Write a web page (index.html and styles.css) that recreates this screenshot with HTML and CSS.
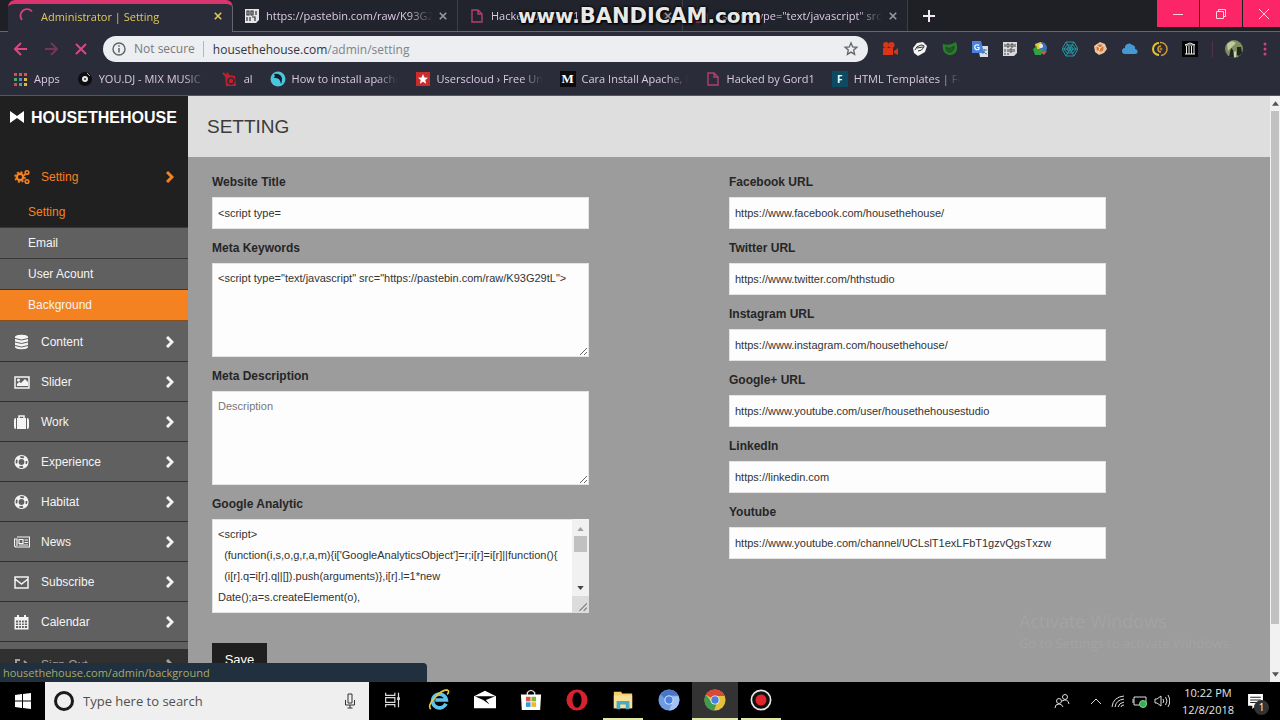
FILE: index.html
```html
<!DOCTYPE html>
<html lang="en">
<head>
    <meta charset="UTF-8">
    <meta name="viewport" content="width=device-width, initial-scale=1.0">
    <title>Administrator | Setting</title>
    <link rel="stylesheet" href="styles.css">
</head>
<body>

    <!-- Browser window -->
    <header class="browser">
        <div class="tabs">
            <div class="tab active">
                <svg class="icon" viewBox="0 0 16 16"><path d="M3 12A6 6 0 0 1 13 3.500" fill="none" stroke="#d8417a" stroke-width="1.800"/></svg>
                <span class="tab-title">Administrator | Setting</span>
                <button class="tab-close" aria-label="Close tab"><svg viewBox="0 0 10 10"><path d="M1 1l8 8M9 1l-8 8"/></svg></button>
            </div>
            <div class="tab">
                <svg class="icon" viewBox="0 0 16 16"><path d="M1 1h14v11l-3 3H1z" fill="#e4e4ea"/><path d="M3 3v4h2V3zM7 3v4h2V3zM12 3v4M3 9v4M6 9v4M8 9h3v4" fill="none" stroke="#333" stroke-width="1.200"/></svg>
                <span class="tab-title">https://pastebin.com/raw/K93G29tL</span>
                <button class="tab-close" aria-label="Close tab"><svg viewBox="0 0 10 10"><path d="M1 1l8 8M9 1l-8 8"/></svg></button>
            </div>
            <div class="tab">
                <svg class="icon" viewBox="0 0 16 16"><path d="M3 2h6l4 4v8H3zM9 2v4h4" fill="none" stroke="#b0406e" stroke-width="1.400"/></svg>
                <span class="tab-title">Hacked by Gord1</span>
                <button class="tab-close" aria-label="Close tab"><svg viewBox="0 0 10 10"><path d="M1 1l8 8M9 1l-8 8"/></svg></button>
            </div>
            <div class="tab">
                <svg class="icon" viewBox="0 0 16 16"><path d="M3 2h6l4 4v8H3zM9 2v4h4" fill="none" stroke="#b0406e" stroke-width="1.400"/></svg>
                <span class="tab-title">&lt;script type="text/javascript" src="https://pastebin.com"&gt;</span>
                <button class="tab-close" aria-label="Close tab"><svg viewBox="0 0 10 10"><path d="M1 1l8 8M9 1l-8 8"/></svg></button>
            </div>
            <button class="new-tab" aria-label="New tab"><svg viewBox="0 0 12 12"><path d="M6 0v12M0 6h12"/></svg></button>
            <div class="window-buttons">
                <button aria-label="Minimize"><svg viewBox="0 0 10 10"><path d="M0 5.500h10"/></svg></button>
                <button aria-label="Restore"><svg viewBox="0 0 10 10"><path d="M.5 2.500h7v7h-7zM2.500 2.500v-2h7v7h-2"/></svg></button>
                <button aria-label="Close"><svg viewBox="0 0 10 10"><path d="M0 0l10 10M10 0L0 10"/></svg></button>
            </div>
        </div>

        <div class="toolbar">
            <button class="nav-btn" aria-label="Back"><svg viewBox="0 0 14 14"><path d="M13 7H1M7 1L1 7l6 6"/></svg></button>
            <button class="nav-btn dim" aria-label="Forward"><svg viewBox="0 0 14 14"><path d="M1 7h12M7 1l6 6-6 6"/></svg></button>
            <button class="nav-btn" aria-label="Stop"><svg viewBox="0 0 14 14"><path d="M2 2l10 10M12 2L2 12"/></svg></button>
            <div class="address">
                <svg class="icon" viewBox="0 0 16 16"><circle cx="8" cy="8" r="6" fill="none" stroke="#5f6368" stroke-width="1.400"/><path d="M8 7v4.500M8 4.300v1.500" stroke="#5f6368" stroke-width="1.500"/></svg>
                <span class="secure">Not secure</span>
                <span class="url">housethehouse.com<span>/admin/setting</span></span>
                <svg class="icon" viewBox="0 0 16 16"><path d="M8 2l1.700 3.900 4.200.4-3.200 2.800.9 4.200L8 11.100l-3.600 2.200.9-4.200L2.100 6.300l4.200-.4z" fill="none" stroke="#5f6368" stroke-width="1.300"/></svg>
            </div>
            <div class="extensions">
                <svg class="icon" viewBox="0 0 16 16"><g fill="#d93518"><circle cx="4" cy="4" r="3"/><circle cx="9.500" cy="4" r="3"/><path d="M1 7h10v7H1zM12 10l4-3v7l-4-2z"/></g></svg>
                <svg class="icon" viewBox="0 0 16 16"><path d="M5 2l6-1 4 4-2 6-7 4-4-3-1-5z" fill="#f4f4f4"/><path d="M3 9q1-4 6-5 4 0 3 2-2 4-6 4M5 7l6-1" fill="none" stroke="#333"/></svg>
                <svg class="icon" viewBox="0 0 16 16"><path d="M1 3q7 2 13-2 3 8-2 12-6 3-10-2-2-4-1-8z" fill="#2c7a2e"/><path d="M4 6q0 6 5 5 4-2 3-6-5 4-8 1" fill="#205e24" stroke="#144d18"/></svg>
                <svg class="icon" viewBox="0 0 16 16"><path d="M6 5h10v11H8z" fill="#dadfe6"/><path d="M0 0h9l3 12H0z" fill="#4a82e0"/><path d="M7 4.500a2.500 2.500 0 1 0 0 3.500V6.500H5" fill="none" stroke="#fff" stroke-width="1.200"/><path d="M10 9h5M12.500 8q0 4-2 5M11 10q2 3 4 3" fill="none" stroke="#58789a"/></svg>
                <svg class="icon" viewBox="0 0 16 16"><path d="M1 1h14v11l-3 3H1z" fill="#d9d9de"/><path d="M3 3v3M5 3h2v3H5zM9 3h2v3H9zM13 3v3M3 8v3M6 8v3M8 8h2v3H8zM12 8v3M3 12v2M6 12v2" fill="none" stroke="#444"/></svg>
                <svg class="icon" viewBox="0 0 16 16"><circle cx="9" cy="7" r="6" fill="#3d71b8"/><path d="M3 3l6-2 2 5-6 3z" fill="#e6c92f"/><path d="M1 8l4-3v3h6l-2 6H3z" fill="#31a243"/><path d="M9 11l6-1-3 4z" fill="#d65b37"/><circle cx="9" cy="5" r="2" fill="#dfe9ef"/></svg>
                <svg class="icon" viewBox="0 0 16 16"><path d="M4 1h8l4 7-4 7H4L0 8zM5 4h6l3 4-3 4H5L2 8zM4 1l8 14M12 1L4 15M0 8h16M6 6h4l1 2-1 2H6L5 8z" fill="none" stroke="#2597a3"/></svg>
                <svg class="icon" viewBox="0 0 16 16"><path d="M8 1l5 2 2 5-3 4-5 2-4-3-1-6z" fill="#e9c2a0"/><circle cx="8" cy="7" r="3.500" fill="#d87535"/><path d="M4 4l4 3 4-3M8 7l-2 5" stroke="#f9e4d0" fill="none"/></svg>
                <svg class="icon" viewBox="0 0 16 16"><path d="M3 13a3 3 0 0 1 0-6 4 4 0 0 1 7-3 3 3 0 0 1 3 4 2.500 2.500 0 0 1 0 5z" fill="#4599d2"/></svg>
                <svg class="icon" viewBox="0 0 16 16"><path d="M7 2a6 6 0 0 0 0 12" fill="none" stroke="#e3c52d" stroke-width="2"/><path d="M9 5a3 3 0 1 0 0 6M8 1.500a6.500 6.500 0 0 1 1 13" fill="none" stroke="#d49b33" stroke-width="1.500"/><circle cx="9" cy="8" r="1.500" fill="#a87a2c"/></svg>
                <svg class="icon" viewBox="0 0 16 16"><path d="M0 0h16v16H0z" fill="#050505"/><path d="M3 4l5-2 5 2zM3 13h10M4.500 5v8M7 5v8M9.500 5v8M12 5v8" fill="none" stroke="#eee"/></svg>
            </div>
            <span class="divider"></span>
            <svg class="avatar" viewBox="0 0 18 18"><circle cx="9" cy="9" r="9" fill="#7f8e60"/><path d="M2 4l5-3 4 2-4 4-4 4z" fill="#c2c99c"/><path d="M4 17l2-9 2 2 1 8zM12 15l0-8 4 0 1 6-3 3z" fill="#20251f"/><path d="M9 12l2-1v6H9z" fill="#cdd3c0"/></svg>
            <button class="menu-btn" aria-label="Menu"><svg viewBox="0 0 4 14"><circle cx="2" cy="2" r="1.500"/><circle cx="2" cy="7" r="1.500"/><circle cx="2" cy="12" r="1.500"/></svg></button>
        </div>

        <nav class="bookmarks">
            <a href="#"><svg class="icon" viewBox="0 0 16 16"><path d="M2 2h3v3H2zM2 12h3v3H2z" fill="#d64b4b"/><path d="M7 2h3v3H7zM12 2h3v3h-3z" fill="#d8574d"/><path d="M2 7h3v3H2zM7 12h3v3H7z" fill="#4bab62"/><path d="M7 7h3v3H7z" fill="#4d88df"/><path d="M12 7h3v3h-3zM12 12h3v3h-3z" fill="#e0b541"/></svg><span>Apps</span></a>
            <a href="#"><svg class="icon" viewBox="0 0 16 16"><circle cx="8" cy="8" r="7" fill="#0e0e12"/><circle cx="8" cy="8" r="3" fill="#e8e8e8"/><circle cx="8" cy="8" r="1" fill="#333"/><path d="M10 2l3 3" stroke="#aaa"/></svg><span>YOU.DJ - MIX MUSIC ONLINE</span></a>
            <a href="#"><svg class="icon" viewBox="0 0 16 16"><path d="M3 4l3-3 1 3 6 1 1 10H4z" fill="#c41e2b"/><circle cx="9" cy="10" r="3" fill="none" stroke="#2a2c38" stroke-width="1.500"/><path d="M1 2l3 3" stroke="#c41e2b" stroke-width="2"/></svg><span>al</span></a>
            <a href="#"><svg class="icon" viewBox="0 0 16 16"><circle cx="8" cy="8" r="7.500" fill="#4cc5df"/><path d="M4 3q6-1 8 4 0 4-1 6-1-6-5-6l-3 0q3-1 1-4z" fill="#10202d"/></svg><span>How to install apache tomcat</span></a>
            <a href="#"><svg class="icon" viewBox="0 0 16 16"><path d="M1 1h14v14H1z" fill="#cc2b2b"/><path d="M8 3l1.500 3.500 3.500.3-2.700 2.300.8 3.600L8 10.800l-3.100 1.900.8-3.600L3 6.800l3.500-.3z" fill="#fff"/></svg><span>Userscloud › Free Unlimited</span></a>
            <a href="#"><b class="icon badge-m">M</b><span>Cara Install Apache, MySQL</span></a>
            <a href="#"><svg class="icon" viewBox="0 0 16 16"><path d="M3 2h6l4 4v8H3zM9 2v4h4" fill="none" stroke="#b0406e" stroke-width="1.400"/></svg><span>Hacked by Gord1</span></a>
            <a href="#"><b class="icon badge-f">F</b><span>HTML Templates | Foundation</span></a>
        </nav>
        <div class="watermark">www.<b>BANDICAM</b>.com</div>
    </header>

    <!-- Admin page -->
    <main class="page">
        <aside class="sidebar">
            <a class="logo" href="#"><svg viewBox="0 0 14 12"><path d="M0 0l7 5 7-5v12L7 7l-7 5z"/></svg>HOUSETHEHOUSE</a>
            <ul class="menu">
                <li class="open">
                    <a href="#"><svg class="icon" viewBox="0 0 16 16"><g fill="none" stroke="currentColor"><circle cx="6" cy="8" r="3.200" stroke-width="2.400"/><circle cx="6" cy="8" r="5" stroke-width="1.500" stroke-dasharray="2 1.930"/><circle cx="13" cy="3.500" r="1.800" stroke-width="1.600"/><circle cx="13" cy="12.500" r="1.800" stroke-width="1.600"/></g></svg>Setting<svg class="arrow" viewBox="0 0 8 12"><path d="M1 1l5 5-5 5"/></svg></a>
                    <ul class="submenu">
                        <li class="current"><a href="#">Setting</a></li>
                        <li><a href="#">Email</a></li>
                        <li><a href="#">User Acount</a></li>
                        <li class="hovered"><a href="#">Background</a></li>
                    </ul>
                </li>
                <li><a href="#"><svg class="icon" viewBox="0 0 16 16"><path d="M1 3c0-3 13-3 13 0v10c0 3-13 3-13 0z" fill="currentColor"/><path d="M1 4.500q6.500 3 13 0M1 8q6.500 3 13 0M1 11.500q6.500 3 13 0" fill="none" stroke="#606060"/></svg>Content<svg class="arrow" viewBox="0 0 8 12"><path d="M1 1l5 5-5 5"/></svg></a></li>
                <li><a href="#"><svg class="icon" viewBox="0 0 16 16"><path d="M1 3h14v11H1z" fill="none" stroke="currentColor" stroke-width="1.500"/><circle cx="4.500" cy="6" r="1.500" fill="currentColor"/><path d="M3 12V10l2-2 2 1 4-4 3 3v4z" fill="currentColor"/></svg>Slider<svg class="arrow" viewBox="0 0 8 12"><path d="M1 1l5 5-5 5"/></svg></a></li>
                <li><a href="#"><svg class="icon" viewBox="0 0 16 16"><path d="M5 5V2h5v3" fill="none" stroke="currentColor" stroke-width="1.500"/><path d="M0 6q0-2 2-2v11q-2 0-2-2zM3 4h9v11H3zM13 4q2 0 2 2v7q0 2-2 2z" fill="currentColor"/></svg>Work<svg class="arrow" viewBox="0 0 8 12"><path d="M1 1l5 5-5 5"/></svg></a></li>
                <li><a href="#"><svg class="icon" viewBox="0 0 16 16"><g fill="none" stroke="currentColor"><circle cx="7.500" cy="8" r="6.500" stroke-width="1.200"/><circle cx="7.500" cy="8" r="3.500" stroke-width="1.200"/><circle cx="7.500" cy="8" r="5" stroke-width="3" stroke-dasharray="4 3.850" stroke-dashoffset="-2"/></g></svg>Experience<svg class="arrow" viewBox="0 0 8 12"><path d="M1 1l5 5-5 5"/></svg></a></li>
                <li><a href="#"><svg class="icon" viewBox="0 0 16 16"><g fill="none" stroke="currentColor"><circle cx="7.500" cy="8" r="6.500" stroke-width="1.200"/><circle cx="7.500" cy="8" r="3.500" stroke-width="1.200"/><circle cx="7.500" cy="8" r="5" stroke-width="3" stroke-dasharray="4 3.850" stroke-dashoffset="-2"/></g></svg>Habitat<svg class="arrow" viewBox="0 0 8 12"><path d="M1 1l5 5-5 5"/></svg></a></li>
                <li><a href="#"><svg class="icon" viewBox="0 0 16 16"><path d="M3 3h12.500v10H1.500L.5 12V5H3v7M5 5.500h4v4H5zM10.500 6H14M10.500 8.500H14M5 11h9" fill="none" stroke="currentColor" stroke-width="1.200"/></svg>News<svg class="arrow" viewBox="0 0 8 12"><path d="M1 1l5 5-5 5"/></svg></a></li>
                <li><a href="#"><svg class="icon" viewBox="0 0 16 16"><path d="M1 3h13v11H1zM1 5l6.500 5L14 5" fill="none" stroke="currentColor" stroke-width="1.500"/></svg>Subscribe<svg class="arrow" viewBox="0 0 8 12"><path d="M1 1l5 5-5 5"/></svg></a></li>
                <li><a href="#"><svg class="icon" viewBox="0 0 16 16"><path d="M.5 3h14v12.500H.5z" fill="currentColor"/><path d="M4 1v3M11 1v3" stroke="currentColor" stroke-width="2"/><path d="M2 6.500h11v7.500H2z" fill="#606060"/><path d="M2 9h11M2 11.500h11M4.700 6v8M7.500 6v8M10.300 6v8" stroke="currentColor"/></svg>Calendar<svg class="arrow" viewBox="0 0 8 12"><path d="M1 1l5 5-5 5"/></svg></a></li>
            </ul>
            <a class="sign-out" href="#"><svg class="icon" viewBox="0 0 16 16"><path d="M6 3H2v10h4M6 8h8M10 4l4 4-4 4" fill="none" stroke="currentColor" stroke-width="2"/></svg>Sign Out<svg class="arrow" viewBox="0 0 8 12"><path d="M1 1l5 5-5 5"/></svg></a>
        </aside>

        <section class="content">
            <div class="page-title"><h1>SETTING</h1></div>
            <form class="settings">
                <div class="column">
                    <div class="form-group">
                        <label for="title">Website Title</label>
                        <input type="text" id="title" value="&lt;script type=">
                    </div>
                    <div class="form-group">
                        <label for="keywords">Meta Keywords</label>
                        <textarea id="keywords">&lt;script type="text/javascript" src="https://pastebin.com/raw/K93G29tL"&gt;</textarea>
                    </div>
                    <div class="form-group">
                        <label for="description">Meta Description</label>
                        <textarea id="description" placeholder="Description"></textarea>
                    </div>
                    <div class="form-group">
                        <label for="analytic">Google Analytic</label>
                        <div class="scroll-box">
                            <textarea id="analytic">&lt;script&gt;
  (function(i,s,o,g,r,a,m){i['GoogleAnalyticsObject']=r;i[r]=i[r]||function(){
  (i[r].q=i[r].q||[]).push(arguments)},i[r].l=1*new Date();a=s.createElement(o),</textarea>
                            <div class="scroll-track">
                                <svg class="up" viewBox="0 0 8 5"><path d="M0 5l4-5 4 5z"/></svg>
                                <span class="scroll-thumb"></span>
                                <svg viewBox="0 0 8 5"><path d="M0 0l4 5 4-5z"/></svg>
                                <svg class="grip" viewBox="0 0 16 16"><path d="M7 14l7-7M11 14l3-3"/></svg>
                            </div>
                        </div>
                    </div>
                    <button type="button" class="save">Save</button>
                </div>
                <div class="column">
                    <div class="form-group">
                        <label for="facebook">Facebook URL</label>
                        <input type="text" id="facebook" value="https://www.facebook.com/housethehouse/">
                    </div>
                    <div class="form-group">
                        <label for="twitter">Twitter URL</label>
                        <input type="text" id="twitter" value="https://www.twitter.com/hthstudio">
                    </div>
                    <div class="form-group">
                        <label for="instagram">Instagram URL</label>
                        <input type="text" id="instagram" value="https://www.instagram.com/housethehouse/">
                    </div>
                    <div class="form-group">
                        <label for="google">Google+ URL</label>
                        <input type="text" id="google" value="https://www.youtube.com/user/housethehousestudio">
                    </div>
                    <div class="form-group">
                        <label for="linkedin">LinkedIn</label>
                        <input type="text" id="linkedin" value="https://linkedin.com">
                    </div>
                    <div class="form-group">
                        <label for="youtube">Youtube</label>
                        <input type="text" id="youtube" value="https://www.youtube.com/channel/UCLslT1exLFbT1gzvQgsTxzw">
                    </div>
                </div>
            </form>
        </section>

        <div class="scrollbar">
            <svg viewBox="0 0 8 5"><path d="M0 5l4-5 4 5z"/></svg>
            <span class="thumb"></span>
            <svg viewBox="0 0 8 5"><path d="M0 0l4 5 4-5z"/></svg>
        </div>

        <div class="status">housethehouse.com/admin/background</div>
        <div class="activate">
            <strong>Activate Windows</strong>
            <span>Go to Settings to activate Windows.</span>
        </div>
    </main>

    <!-- Windows taskbar -->
    <footer class="taskbar">
        <button class="start" aria-label="Start"><svg viewBox="0 0 16 16"><path d="M0 2l7-1v6.500H0zM8 1l8-1v7.500H8zM0 8.500h7V15l-7-1zM8 8.500h8V16l-8-1z"/></svg></button>
        <label class="search">
            <svg class="ring" viewBox="0 0 20 20"><circle cx="10" cy="10" r="8.500"/></svg>
            <input type="text" placeholder="Type here to search" aria-label="Type here to search">
            <svg class="mic" viewBox="0 0 12 16"><path d="M4 1h4v9H4zM1.500 7v5h9V7M6 12v3M3.500 15h5"/></svg>
        </label>
        <div class="apps">
            <button aria-label="Task View"><svg viewBox="0 0 24 24"><path d="M4 4v3h10V4M4 20v-3h10v3M4 9.500h10v5H4zM18 4v16" fill="none" stroke="#ddd" stroke-width="1.300"/><path d="M16.500 9h3v3h-3z" fill="#ddd"/></svg></button>
            <button aria-label="Internet Explorer"><svg viewBox="0 0 24 24"><path d="M19.500 16A7.500 7.500 0 1 1 20 12H8" fill="none" stroke="#5cc4ee" stroke-width="4"/><path d="M3 22C-2 17 13 1 21 1q3 1 0 5" fill="none" stroke="#e9c53c" stroke-width="1.800"/></svg></button>
            <button aria-label="Mail"><svg viewBox="0 0 24 24"><path d="M0 8l12-6 12 6v13H0z" fill="#fff"/><path d="M1 8h22l-10 4 4 5-7-5z" fill="#000"/></svg></button>
            <button aria-label="Store"><svg viewBox="0 0 24 24"><path d="M8 7V4q4-5 8 0v3" fill="none" stroke="#ddd" stroke-width="1.500"/><path d="M1 6h22l-1 17H2z" fill="#fff"/><path d="M6.500 8.500h5v5h-5z" fill="#e2543a"/><path d="M12.500 8.500h5v5h-5z" fill="#7ab82f"/><path d="M6.500 14.500h5v5h-5z" fill="#2d9ddd"/><path d="M12.500 14.500h5v5h-5z" fill="#efb62b"/></svg></button>
            <button aria-label="Opera"><svg viewBox="0 0 24 24"><circle cx="12" cy="12" r="11.500" fill="#d8222e"/><ellipse cx="12" cy="12" rx="5" ry="8.500" fill="#000"/></svg></button>
            <button class="running" aria-label="File Explorer"><svg viewBox="0 0 24 24"><path d="M2 3h8l1 2h11v16H2z" fill="#f1cf69"/><path d="M2 7h20v14H2z" fill="#fae096"/><path d="M5 22v-9h14v9h-4v-5H9v5z" fill="#46acc8"/></svg></button>
            <button aria-label="Chromium"><svg viewBox="0 0 24 24"><circle cx="12" cy="12" r="11.500" fill="#6f9ae4"/><path d="M12 .5A11.500 11.500 0 0 1 22 7H12a5 5 0 0 0-5 3L3 6a11.500 11.500 0 0 1 9-5.500" fill="#4a74c4"/><path d="M22.500 8a11.500 11.500 0 0 1-10.500 15.500l4-9q2-3 0-6.500z" fill="#a3c2f4"/><circle cx="12" cy="12" r="5" fill="#eef3fc"/><circle cx="12" cy="12" r="4" fill="#4b80df"/></svg></button>
            <button class="running current" aria-label="Google Chrome"><svg viewBox="0 0 24 24"><circle cx="12" cy="12" r="11.500" fill="#e3c03d"/><path d="M12 12L2 6.300A11.500 11.500 0 0 1 22.600 7.500H12z" fill="#d8493c"/><path d="M2 6.300L8 14l5.500 3-2.500 6.450A11.500 11.500 0 0 1 2 6.300z" fill="#3e9c50"/><circle cx="12" cy="12" r="5" fill="#f2f2f2"/><circle cx="12" cy="12" r="4" fill="#4b80df"/></svg></button>
            <button class="running" aria-label="Bandicam"><svg viewBox="0 0 24 24"><circle cx="12" cy="12" r="10.500" fill="#111" stroke="#e8e8e8" stroke-width="1.800"/><circle cx="12" cy="12" r="6" fill="#e0262a"/></svg></button>
        </div>
        <div class="tray">
            <svg class="icon people" viewBox="0 0 16 16"><circle cx="11" cy="4" r="2.500"/><circle cx="5" cy="8" r="2.500"/><path d="M1 15q0-4 4-4 3 0 4 3M8 8q6-3 7 3"/></svg>
            <svg class="icon" viewBox="0 0 16 16"><path d="M3 11l5-5 5 5"/></svg>
            <svg class="icon" viewBox="0 0 16 16"><path d="M2 14Q3 4 14 3M5 14q1-7 9-8M8 14q1-4 6-5M11 14q0-2 3-2"/></svg>
            <svg class="icon" viewBox="0 0 16 16"><path d="M2 4h12v8H2zM1 6v4"/><circle cx="11" cy="11" r="3.500" fill="#35b258" stroke="#78d48f"/></svg>
            <svg class="icon" viewBox="0 0 16 16"><path d="M1 6h2l4-3v10l-4-3H1zM9 6q1.500 2 0 4M11.500 4q3 4 0 8M14 2q3.500 6 0 12"/></svg>
            <div class="clock"><span>10:22 PM</span><span>12/8/2018</span></div>
            <button class="notice" aria-label="Notifications"><svg viewBox="0 0 16 16"><path d="M1 1h14v11H8l-3 3v-3H1z" fill="#fff"/><path d="M3 4h10M3 6.500h10M3 9h7" stroke="#222"/></svg><span class="count">1</span></button>
        </div>
    </footer>

</body>
</html>
```
FILE: styles.css
```css
* {
    box-sizing: border-box;
}
body {
    margin: 0;
    height: 100vh;
    display: flex;
    flex-direction: column;
    overflow: hidden;
    font-family: "Liberation Sans", Arial, sans-serif;
    font-size: 12px;
}
button {
    border: none;
    padding: 0;
    background: none;
    font: inherit;
    cursor: pointer;
}
a {
    color: inherit;
    text-decoration: none;
}
svg {
    display: block;
    flex: none;
}
.icon {
    width: 16px;
    height: 16px;
    flex: none;
}

/* Browser */
.browser {
    position: relative;
    background: #2a2c39;
    color: #dcc9e6;
    font-family: "Open Sans", "Noto Sans", sans-serif;
    font-size: 11px;
    border-bottom: 1px solid #55565e;
}
.tabs {
    display: flex;
    height: 32px;
    padding-left: 8px;
    background: #1e2025;
    border-bottom: 1px solid #66676c;
}
.tab {
    display: flex;
    align-items: center;
    gap: 6px;
    width: 225px;
    padding: 0 10px 0 11px;
    background: #22242d;
    border-right: 1px solid #3d3e48;
}
.tab.active {
    height: 32px;
    background: #2a2c39;
    border-top: 4px solid #d8356f;
    border-right: 1px solid #66676c;
    border-radius: 7px 7px 0 0;
    padding-bottom: 4px;
    color: #dfc957;
}
.tab-title {
    flex: 1;
    min-width: 0;
    overflow: hidden;
    white-space: nowrap;
    -webkit-mask-image: linear-gradient(90deg, #000 85%, transparent);
    mask-image: linear-gradient(90deg, #000 85%, transparent);
}
.tab-close svg {
    width: 8px;
    height: 8px;
    fill: none;
    stroke: #9a9aa5;
    stroke-width: 2;
}
.active .tab-close svg {
    stroke: #dfc957;
}
.new-tab {
    width: 42px;
}
.new-tab svg {
    width: 12px;
    height: 12px;
    margin: 0 auto;
    fill: none;
    stroke: #f2e9f5;
    stroke-width: 2;
}
.window-buttons {
    display: flex;
    gap: 1px;
    height: 27px;
    margin-left: auto;
    margin-right: -5px;
}
.window-buttons button {
    width: 42px;
    background: #fb2568;
}
.window-buttons svg {
    width: 10px;
    height: 10px;
    margin: 0 auto;
    fill: none;
    stroke: #ffd5e2;
}
.toolbar {
    display: flex;
    align-items: center;
    height: 34px;
    padding: 0 13px;
}
.nav-btn {
    width: 30px;
    padding-left: 1px;
}
.nav-btn svg {
    width: 14px;
    height: 14px;
    fill: none;
    stroke: #dc477f;
    stroke-width: 2;
}
.nav-btn.dim svg {
    stroke: #743654;
}
.address {
    flex: 1;
    display: flex;
    align-items: center;
    height: 26px;
    padding: 0 9px 0 8px;
    border-radius: 13px;
    background: #eceef1;
    font-size: 12px;
}
.secure {
    padding: 0 8px 0 7px;
    color: #77797d;
    border-right: 1px solid #b5b7bb;
    line-height: 16px;
}
.url {
    flex: 1;
    padding-left: 9px;
    color: #33363a;
}
.url span {
    color: #808388;
}
.extensions {
    display: flex;
    gap: 14px;
    padding-left: 14px;
}
.divider {
    width: 1px;
    height: 16px;
    margin: 0 12px 0 14px;
    background: #59304a;
}
.avatar {
    width: 18px;
    height: 18px;
}
.menu-btn {
    margin-left: 20px;
}
.menu-btn svg {
    width: 4px;
    height: 14px;
    fill: #d0427a;
}
.bookmarks {
    display: flex;
    gap: 17px;
    height: 29px;
    padding: 0 12px 4px;
}
.bookmarks a {
    display: flex;
    align-items: center;
    gap: 6px;
}
.bookmarks span {
    max-width: 106px;
    overflow: hidden;
    white-space: nowrap;
    -webkit-mask-image: linear-gradient(90deg, #000 85px, transparent 106px);
    mask-image: linear-gradient(90deg, #000 85px, transparent 106px);
}
.badge-m,
.badge-f {
    background: #0c0c0c;
    color: #fff;
    line-height: 16px;
    text-align: center;
    font-family: "Liberation Serif", serif;
    font-size: 13px;
}
.badge-f {
    background: #0d4a63;
    font-family: "Open Sans", sans-serif;
    font-size: 10px;
}
.watermark {
    position: absolute;
    top: 4px;
    left: 516px;
    padding: 0 2px;
    color: #e8e8e8;
    font-family: "DejaVu Sans", sans-serif;
    font-size: 20px;
    font-weight: bold;
    line-height: 24px;
    text-shadow: 0 0 3px #000, 0 0 3px #000, 1px 1px 2px #000;
}
.watermark b {
    font-size: 21px;
}

/* Page */
.page {
    position: relative;
    flex: 1;
    min-height: 0;
    display: flex;
    overflow: hidden;
    background: #9c9c9c;
}
.sidebar {
    width: 188px;
    flex: none;
    background: #606060;
    color: #f4f4f4;
}
.logo {
    display: flex;
    gap: 7px;
    height: 61px;
    padding: 12px 0 0 10px;
    background: #202020;
    color: #fff;
    font-size: 16px;
    font-weight: bold;
    line-height: 19px;
}
.logo svg {
    width: 14px;
    height: 12px;
    margin-top: 3px;
    fill: #fff;
}
.menu,
.submenu {
    margin: 0;
    padding: 0;
    list-style: none;
}
.menu > li > a,
.sign-out {
    display: flex;
    align-items: center;
    gap: 11px;
    height: 40px;
    padding: 0 14px;
    border-bottom: 1px solid #303030;
}
.menu > .open > a {
    background: #202020;
    border-bottom: none;
    color: #f58220;
}
.menu > .open {
    padding-bottom: 1px;
}
.arrow {
    width: 8px;
    height: 12px;
    margin-left: auto;
    fill: none;
    stroke: currentColor;
    stroke-width: 3;
}
.submenu a {
    display: block;
    height: 31px;
    padding-left: 28px;
    line-height: 30px;
    border-bottom: 1px solid #383838;
}
.submenu .current a {
    background: #202020;
    color: #f58220;
}
.submenu .hovered a {
    background: #f58220;
    border-bottom-color: #8a4f1d;
}
.sign-out {
    margin-top: 7px;
    padding-bottom: 8px;
    background: #303030;
    color: #a0a0a0;
}
.content {
    flex: 1;
}
.page-title {
    height: 61px;
    padding-left: 19px;
    background: #dedede;
}
.page-title h1 {
    margin: 0;
    color: #3b3b3b;
    font-size: 19px;
    font-weight: normal;
    line-height: 61px;
}
.settings {
    display: grid;
    grid-template-columns: 1fr 1fr;
    padding: 15px 24px;
}
.form-group {
    width: 73%;
    margin-bottom: 9px;
}
.form-group label {
    display: block;
    margin-bottom: 5px;
    color: #262626;
    font-weight: bold;
    line-height: 20px;
}
.form-group input,
.form-group textarea {
    display: block;
    width: 100%;
    height: 32px;
    margin: 0;
    padding: 0 5px;
    border: 1px solid #e4e4e4;
    border-radius: 0;
    background: #fdfdfd;
    color: #333;
    font: 11px "Liberation Sans", Arial, sans-serif;
}
.form-group textarea {
    height: 94px;
    padding: 4px 5px;
    line-height: 21px;
}
.form-group textarea::placeholder {
    color: #777;
}
.scroll-box {
    display: flex;
}
.scroll-box textarea {
    flex: 1;
    padding-right: 0;
    border-right: none;
    resize: none;
}
.scroll-track {
    display: flex;
    flex-direction: column;
    align-items: center;
    width: 17px;
    padding-top: 8px;
    background: #f1f1f1;
}
.scroll-track svg {
    width: 7px;
    height: 4px;
    fill: #444;
}
.scroll-track .up {
    fill: #a0a0a0;
}
.scroll-thumb {
    width: 13px;
    height: 16px;
    margin: 5px 0 auto;
    background: #c1c1c1;
}
.scroll-track .grip {
    width: 17px;
    height: 17px;
    margin-top: 6px;
    background: #dcdcdc;
    stroke: #777;
}
.save {
    margin-top: 21px;
    width: 55px;
    height: 32px;
    background: #1f1f1f;
    color: #fff;
    font-size: 13px;
}
.scrollbar {
    display: flex;
    flex-direction: column;
    align-items: center;
    width: 10px;
    padding: 5px 0;
    background: #f1f1f1;
}
.scrollbar svg {
    width: 7px;
    height: 5px;
    fill: #555;
}
.thumb {
    width: 8px;
    height: 89%;
    margin: 5px 0 auto;
    background: #c1c1c1;
}
.status {
    position: absolute;
    left: 0;
    bottom: 0;
    width: 427px;
    padding-left: 3px;
    border-radius: 0 4px 0 0;
    background: #20303f;
    color: #a9a968;
    font-family: "Open Sans", "Noto Sans", sans-serif;
    font-size: 11px;
    line-height: 19px;
}
.activate {
    position: absolute;
    right: 48px;
    bottom: 28px;
    display: flex;
    flex-direction: column;
    color: #a3a3a3;
    font-family: "Open Sans", "Noto Sans", sans-serif;
    font-size: 13px;
    line-height: 22px;
}
.activate strong {
    font-size: 18px;
    font-weight: normal;
}

/* Taskbar */
.taskbar {
    display: flex;
    height: 38px;
    background: #000;
    color: #e6e6e6;
    font-family: "Open Sans", "Noto Sans", sans-serif;
}
.start {
    width: 45px;
}
.start svg {
    width: 16px;
    height: 16px;
    margin: 0 auto;
    fill: #fff;
}
.search {
    display: flex;
    align-items: center;
    gap: 9px;
    width: 324px;
    padding: 0 13px 0 9px;
    background: #efefef;
}
.search input {
    flex: 1;
    min-width: 0;
    padding: 0;
    border: none;
    background: none;
    font: 13px "Open Sans", "Noto Sans", sans-serif;
}
.search input::placeholder {
    color: #505050;
}
.ring {
    width: 20px;
    height: 20px;
    fill: none;
    stroke: #1a1a1a;
    stroke-width: 3;
}
.mic {
    width: 12px;
    height: 16px;
    fill: none;
    stroke: #333;
}
.apps {
    display: flex;
    padding-left: 1px;
}
.apps button {
    width: 46px;
    border-bottom: 2px solid transparent;
}
.apps svg {
    width: 22px;
    height: 22px;
    margin: 0 auto;
}
.apps .running {
    border-image: linear-gradient(90deg, transparent 10%, #e3e8a4 10%, #e3e8a4 90%, transparent 90%) 2;
}
.apps .current {
    background: #333;
    border-image: none;
    border-bottom-color: #e3e8a4;
}
.tray {
    display: flex;
    align-items: center;
    gap: 6px;
    margin-left: auto;
    padding-right: 16px;
}
.tray .icon {
    fill: none;
    stroke: #dcdcdc;
}
.tray .people {
    margin-right: 12px;
}
.clock {
    display: flex;
    flex-direction: column;
    align-items: center;
    width: 64px;
    font-size: 11px;
    line-height: 17px;
}
.notice {
    position: relative;
    margin-left: 1px;
}
.notice svg {
    width: 17px;
    height: 17px;
}
.count {
    position: absolute;
    left: 7px;
    top: 7px;
    width: 15px;
    height: 15px;
    border-radius: 50%;
    background: #333;
    color: #fff;
    font-size: 10px;
    line-height: 15px;
}
```
